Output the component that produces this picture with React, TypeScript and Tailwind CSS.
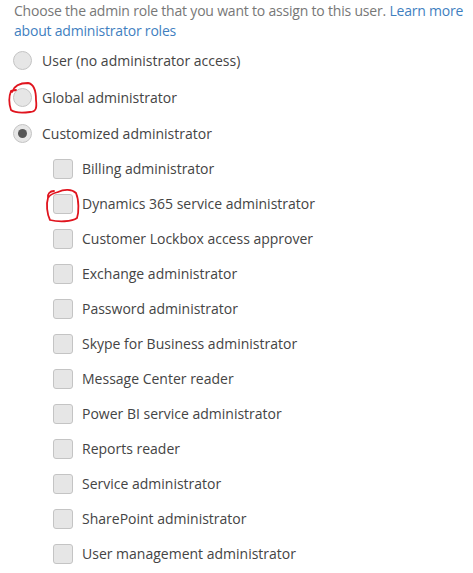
import React from 'react';

const roles = [
  'Billing administrator',
  'Dynamics 365 service administrator',
  'Customer Lockbox access approver',
  'Exchange administrator',
  'Password administrator',
  'Skype for Business administrator',
  'Message Center reader',
  'Power BI service administrator',
  'Reports reader',
  'Service administrator',
  'SharePoint administrator',
  'User management administrator',
];

const Radio = ({ checked }: { checked?: boolean }) => (
  <span className="w-[19px] h-[19px] rounded-full border border-[#c4c4c4] bg-[#e6e6e6] flex items-center justify-center shrink-0">
    {checked && <span className="w-[9px] h-[9px] rounded-full bg-[#555]" />}
  </span>
);

const Checkbox = () => (
  <span className="w-[20px] h-[20px] rounded-[3px] border border-[#c4c4c4] bg-[#e6e6e6] shrink-0" />
);

export default function App() {
  return (
    <div
      className="relative w-[473px] h-[573px] bg-white text-[14px] text-[#444] overflow-hidden"
      style={{ fontFamily: '"Open Sans", "Noto Sans", sans-serif' }}
    >
      <p className="pl-[14px] pr-2 pt-[1px] leading-[20px] text-[#777] tracking-[-0.2px]">
        Choose the admin role that you want to assign to this user.{' '}
        <span className="text-[#3f7fbf]">Learn more about administrator roles</span>
      </p>

      <div className="flex flex-col pl-[13px]">
        <label className="flex items-center gap-[10px] h-[38px]">
          <Radio />
          <span>User (no administrator access)</span>
        </label>
        <label className="flex items-center gap-[10px] h-[36px]">
          <Radio />
          <span>Global administrator</span>
        </label>
        <label className="flex items-center gap-[10px] h-[36px]">
          <Radio checked />
          <span>Customized administrator</span>
        </label>
      </div>

      <div className="flex flex-col pl-[53px]">
        {roles.map((role) => (
          <label key={role} className="flex items-center gap-[9px] h-[35px]">
            <Checkbox />
            <span>{role}</span>
          </label>
        ))}
      </div>

      {/* red hand-drawn marks from the screenshot */}
      <svg
        className="absolute inset-0 pointer-events-none"
        width="473"
        height="573"
        viewBox="0 0 473 573"
        fill="none"
      >
        <path
          d="M12 92 C14 86 20 83 28 83 C34 84 36 92 36 100 C37 108 36 112 30 112 C22 113 15 113 11 110 C9 104 9 96 11 91 L16 90"
          stroke="#e0141e"
          strokeWidth="1.8"
          strokeLinecap="round"
          strokeLinejoin="round"
        />
        <path
          d="M58 192 C64 189 72 189 76 193 C79 200 79 212 77 218 C72 222 58 222 50 220 C47 214 46 204 48 198 C50 194 54 193 58 192 M48 198 C47 194 50 191 54 191"
          stroke="#e0141e"
          strokeWidth="1.8"
          strokeLinecap="round"
          strokeLinejoin="round"
        />
      </svg>
    </div>
  );
}
